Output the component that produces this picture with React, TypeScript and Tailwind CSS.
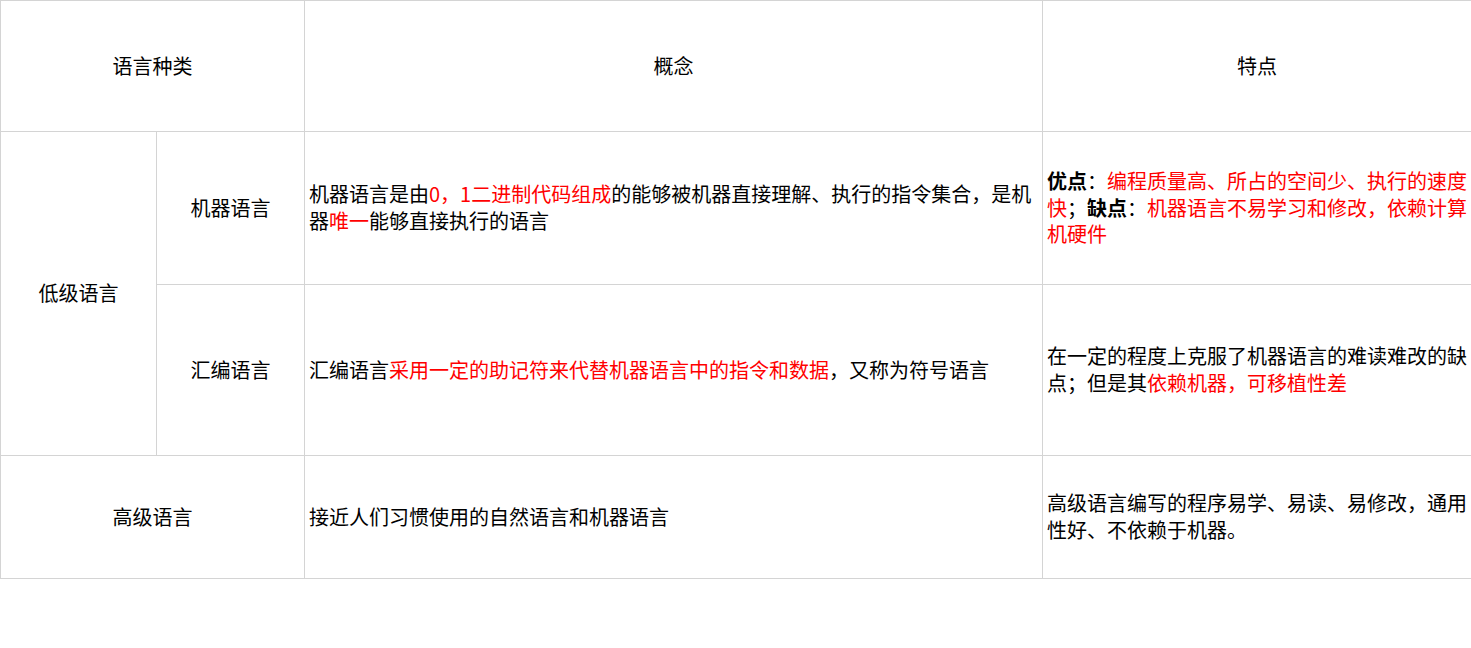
import React from 'react';

const R = ({ children }: { children: React.ReactNode }) => (
  <span className="text-[#ff0000]">{children}</span>
);

const cell = 'border border-[#d4d4d4] align-middle p-0';
const textCell = 'border border-[#d4d4d4] align-middle pl-[4px] pr-[2px] py-0 text-left whitespace-nowrap';

export default function App() {
  return (
    <div className="w-[1471px] h-[648px] bg-white text-black font-['Noto_Sans_CJK_SC','Noto_Sans',sans-serif] text-[20px] leading-[26.6px]">
      <table className="table-fixed border-collapse w-[1471px]">
        <colgroup>
          <col className="w-[156px]" />
          <col className="w-[148px]" />
          <col className="w-[738px]" />
          <col className="w-[429px]" />
        </colgroup>
        <tbody>
          <tr className="h-[131px]">
            <td colSpan={2} className={`${cell} text-center`}>语言种类</td>
            <td className={`${cell} text-center`}>概念</td>
            <td className={`${cell} text-center`}>特点</td>
          </tr>
          <tr className="h-[153px]">
            <td rowSpan={2} className={`${cell} text-center`}>低级语言</td>
            <td className={`${cell} text-center`}>机器语言</td>
            <td className={textCell}>
              机器语言是由<R>0，1二进制代码组成</R>的能够被机器直接理解、执行的指令集合，是机
              <br />
              器<R>唯一</R>能够直接执行的语言
            </td>
            <td className={textCell}>
              <b>优点</b>：<R>编程质量高、所占的空间少、执行的速度</R>
              <br />
              <R>快</R>；<b>缺点</b>：<R>机器语言不易学习和修改，依赖计算</R>
              <br />
              <R>机硬件</R>
            </td>
          </tr>
          <tr className="h-[171px]">
            <td className={`${cell} text-center`}>汇编语言</td>
            <td className={textCell}>
              汇编语言<R>采用一定的助记符来代替机器语言中的指令和数据</R>，又称为符号语言
            </td>
            <td className={textCell}>
              在一定的程度上克服了机器语言的难读难改的缺
              <br />
              点；但是其<R>依赖机器，可移植性差</R>
            </td>
          </tr>
          <tr className="h-[123px]">
            <td colSpan={2} className={`${cell} text-center`}>高级语言</td>
            <td className={textCell}>接近人们习惯使用的自然语言和机器语言</td>
            <td className={textCell}>
              高级语言编写的程序易学、易读、易修改，通用
              <br />
              性好、不依赖于机器。
            </td>
          </tr>
        </tbody>
      </table>
    </div>
  );
}
